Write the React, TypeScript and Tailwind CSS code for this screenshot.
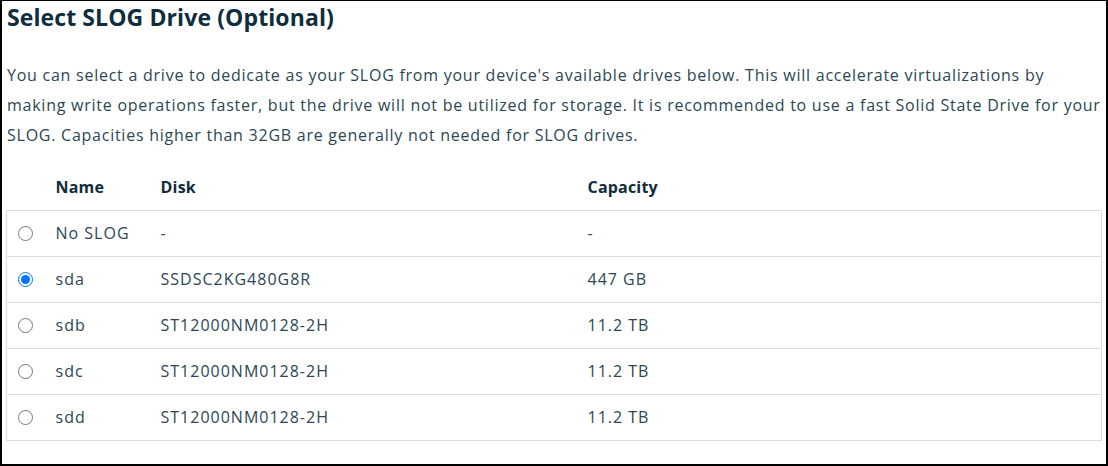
import React, { useState } from 'react';

const drives = [
  { id: 'none', name: 'No SLOG', disk: '-', capacity: '-' },
  { id: 'sda', name: 'sda', disk: 'SSDSC2KG480G8R', capacity: '447 GB' },
  { id: 'sdb', name: 'sdb', disk: 'ST12000NM0128-2H', capacity: '11.2 TB' },
  { id: 'sdc', name: 'sdc', disk: 'ST12000NM0128-2H', capacity: '11.2 TB' },
  { id: 'sdd', name: 'sdd', disk: 'ST12000NM0128-2H', capacity: '11.2 TB' },
];

export default function App() {
  const [selected, setSelected] = useState('sda');

  return (
    <div className="h-[466px] w-[1108px] bg-white border-2 border-t border-black font-['Open_Sans',sans-serif] text-[#2c4653] overflow-hidden">
      <div className="px-[4px]">
        {/* Header */}
        <h1 className="pl-[1px] text-[23px] leading-[32px] font-bold tracking-[0.1px] text-[#0f2d3c]">
          Select SLOG Drive (Optional)
        </h1>
        <p className="mt-[27px] pl-[1px] text-[16px] leading-[30px] tracking-[0.75px] whitespace-nowrap">
          You can select a drive to dedicate as your SLOG from your device's available drives below. This will accelerate virtualizations by
          <br />
          making write operations faster, but the drive will not be utilized for storage. It is recommended to use a fast Solid State Drive for your
          <br />
          SLOG. Capacities higher than 32GB are generally not needed for SLOG drives.
        </p>

        {/* Drive table */}
        <table className="mt-[14px] w-[1096px] table-fixed border-collapse text-[16px] tracking-[1px]">
          <colgroup>
            <col className="w-[39px]" />
            <col className="w-[105px]" />
            <col className="w-[427px]" />
            <col />
          </colgroup>
          <thead>
            <tr className="h-[46px] text-left text-[#0f2d3c]">
              <th></th>
              <th className="px-[10px] font-bold tracking-[0.2px]">Name</th>
              <th className="px-[10px] font-bold tracking-[0.2px]">Disk</th>
              <th className="px-[10px] font-bold tracking-[0.2px]">Capacity</th>
            </tr>
          </thead>
          <tbody>
            {drives.map((d) => (
              <tr
                key={d.id}
                className="h-[46px] border border-[#dddddd] cursor-pointer"
                onClick={() => setSelected(d.id)}
              >
                <td className="pl-[11px]">
                  <input
                    type="radio"
                    name="slog"
                    checked={selected === d.id}
                    onChange={() => setSelected(d.id)}
                    className="block h-[15px] w-[15px] accent-[#0075ff]"
                  />
                </td>
                <td className="px-[10px]">{d.name}</td>
                <td className="px-[10px]">{d.disk}</td>
                <td className="px-[10px]">{d.capacity}</td>
              </tr>
            ))}
          </tbody>
        </table>
      </div>
    </div>
  );
}
